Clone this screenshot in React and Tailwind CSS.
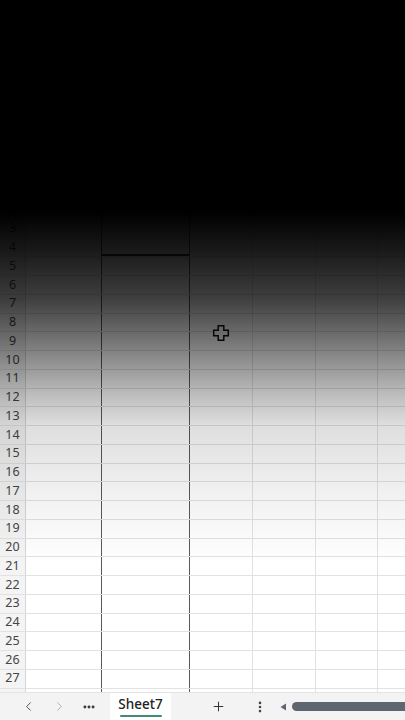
import { ChevronLeft, ChevronRight, Ellipsis, Plus, EllipsisVertical } from 'lucide-react';

const rows = Array.from({ length: 28 }, (_, i) => i + 1);

function Row({ n }) {
  return (
    <div className="flex h-[18.75px] shrink-0 border-b border-[#e2e2e2]">
      <div className="w-[26px] shrink-0 bg-[#f4f4f4] border-r border-[#d6d6d6] flex items-center justify-center text-[12.5px] text-[#454545]">
        {n <= 27 ? n : ''}
      </div>
      <div className="w-[76px] shrink-0 bg-white border-r border-[#5a5a5a]" />
      <div className={`w-[88px] shrink-0 bg-white border-r border-[#5a5a5a] ${n === 4 ? 'shadow-[inset_0_-2px_0_#333]' : ''}`} />
      <div className="w-[63px] shrink-0 bg-white border-r border-[#e2e2e2]" />
      <div className="w-[63px] shrink-0 bg-white border-r border-[#e2e2e2]" />
      <div className="w-[62px] shrink-0 bg-white border-r border-[#e2e2e2]" />
      <div className="w-[63px] shrink-0 bg-white border-r border-[#e2e2e2]" />
    </div>
  );
}

export default function App() {
  return (
    <div className="relative w-[405px] h-[720px] overflow-hidden bg-white" style={{ fontFamily: '"Noto Sans", "Open Sans", sans-serif' }}>
      {/* Sheet grid */}
      <div className="relative h-[692px] overflow-hidden flex flex-col">
        <div className="h-[182.25px] shrink-0 bg-[#f4f4f4]" />
        {rows.map((n) => (
          <Row key={n} n={n} />
        ))}

        {/* Cell cursor */}
        <svg className="absolute left-[212px] top-[324px]" width="18" height="18" viewBox="0 0 16 16">
          <path d="M5.5 1.5h5v4h4v5h-4v4h-5v-4h-4v-5h4z" fill="#fff" stroke="#111" strokeWidth="1.3" />
        </svg>

        {/* Dark fade overlay */}
        <div className="absolute inset-0 pointer-events-none bg-[linear-gradient(to_bottom,rgba(0,0,0,1)_0px,rgba(0,0,0,1)_212px,rgba(0,0,0,0.9)_250px,rgba(0,0,0,0.75)_300px,rgba(0,0,0,0.52)_345px,rgba(0,0,0,0.26)_395px,rgba(0,0,0,0.13)_425px,rgba(0,0,0,0.06)_490px,rgba(0,0,0,0)_565px)]" />
      </div>

      {/* Sheet tab bar */}
      <div className="h-[28px] flex items-center overflow-hidden bg-[#f3f3f3] border-t border-[#e4e4e4]">
        <div className="ml-[14px] w-[28px] shrink-0 flex justify-center">
          <ChevronLeft size={15} strokeWidth={1.6} className="text-[#555]" />
        </div>
        <div className="ml-[3px] w-[28px] shrink-0 flex justify-center">
          <ChevronRight size={15} strokeWidth={1.6} className="text-[#b0b0b0]" />
        </div>
        <div className="ml-[2px] w-[28px] shrink-0 flex justify-center">
          <Ellipsis size={14} strokeWidth={3} className="text-[#333]" />
        </div>
        <div className="ml-[7px] h-full w-[61px] shrink-0 bg-white flex flex-col items-center justify-center">
          <span className="text-[13.5px] leading-none text-[#222] font-medium mt-[2px]">Sheet7</span>
          <div className="mt-[4px] h-[2px] w-[42px] rounded bg-[#3f8a78]" />
        </div>
        <div className="ml-[33px] w-[28px] shrink-0 flex justify-center">
          <Plus size={15} strokeWidth={1.6} className="text-[#333]" />
        </div>
        <div className="ml-[14px] w-[28px] shrink-0 flex justify-center">
          <EllipsisVertical size={14} strokeWidth={2.5} className="text-[#444]" />
        </div>
        <div className="ml-[6px] flex shrink-0 items-center">
          <svg width="7" height="8" viewBox="0 0 7 8">
            <path d="M6 0.5v7L0.5 4z" fill="#5f6670" />
          </svg>
          <div className="ml-[5px] h-[9px] w-[130px] shrink-0 rounded-full bg-[#5f6670]" />
        </div>
      </div>
    </div>
  );
}
